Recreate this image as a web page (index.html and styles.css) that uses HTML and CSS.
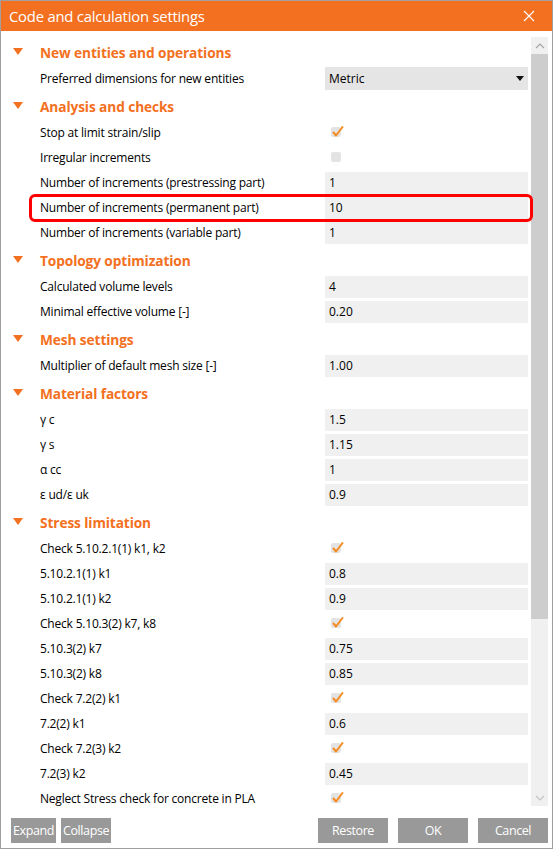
FILE: index.html
```html
<!DOCTYPE html>
<html>
<head>
<meta charset="utf-8">
<link rel="stylesheet" href="styles.css">
</head>
<body>
<div class="window">
  <div class="titlebar">
    <span class="title">Code and calculation settings</span>
    <svg class="close" width="12" height="12" viewBox="0 0 12 12"><path d="M1 1 L11 11 M11 1 L1 11" stroke="#fff" stroke-width="1.1" fill="none"/></svg>
  </div>
  <div class="main">
    <div class="content">
      <div class="group"><span class="tri"></span><span class="gtitle">New entities and operations</span></div>
      <div class="row"><span class="label">Preferred dimensions for new entities</span><div class="value select">Metric<span class="caret"></span></div></div>

      <div class="group"><span class="tri"></span><span class="gtitle">Analysis and checks</span></div>
      <div class="row"><span class="label">Stop at limit strain/slip</span><div class="check"><svg width="16" height="16" viewBox="0 0 16 16"><rect x="1" y="4" width="10" height="10" rx="2" fill="#e3e3e3"/><path d="M3.5 9.5 L6 12.5 L12.5 4" stroke="#f68b1f" stroke-width="2" fill="none" stroke-linecap="round" stroke-linejoin="round"/></svg></div></div>
      <div class="row"><span class="label">Irregular increments</span><div class="check"><svg width="16" height="16" viewBox="0 0 16 16"><rect x="1" y="4" width="10" height="10" rx="2" fill="#e3e3e3"/></svg></div></div>
      <div class="row"><span class="label">Number of increments (prestressing part)</span><div class="value">1</div></div>
      <div class="row hl"><span class="label">Number of increments (permanent part)</span><div class="value">10</div><span class="mark"></span></div>
      <div class="row"><span class="label">Number of increments (variable part)</span><div class="value">1</div></div>

      <div class="group"><span class="tri"></span><span class="gtitle">Topology optimization</span></div>
      <div class="row"><span class="label">Calculated volume levels</span><div class="value">4</div></div>
      <div class="row"><span class="label">Minimal effective volume [-]</span><div class="value">0.20</div></div>

      <div class="group"><span class="tri"></span><span class="gtitle">Mesh settings</span></div>
      <div class="row"><span class="label">Multiplier of default mesh size [-]</span><div class="value">1.00</div></div>

      <div class="group"><span class="tri"></span><span class="gtitle">Material factors</span></div>
      <div class="row"><span class="label">γ c</span><div class="value">1.5</div></div>
      <div class="row"><span class="label">γ s</span><div class="value">1.15</div></div>
      <div class="row"><span class="label">α cc</span><div class="value">1</div></div>
      <div class="row"><span class="label">ε ud/ε uk</span><div class="value">0.9</div></div>

      <div class="group"><span class="tri"></span><span class="gtitle">Stress limitation</span></div>
      <div class="row"><span class="label">Check 5.10.2.1(1) k1, k2</span><div class="check"><svg width="16" height="16" viewBox="0 0 16 16"><rect x="1" y="4" width="10" height="10" rx="2" fill="#e3e3e3"/><path d="M3.5 9.5 L6 12.5 L12.5 4" stroke="#f68b1f" stroke-width="2" fill="none" stroke-linecap="round" stroke-linejoin="round"/></svg></div></div>
      <div class="row"><span class="label">5.10.2.1(1) k1</span><div class="value">0.8</div></div>
      <div class="row"><span class="label">5.10.2.1(1) k2</span><div class="value">0.9</div></div>
      <div class="row"><span class="label">Check 5.10.3(2) k7, k8</span><div class="check"><svg width="16" height="16" viewBox="0 0 16 16"><rect x="1" y="4" width="10" height="10" rx="2" fill="#e3e3e3"/><path d="M3.5 9.5 L6 12.5 L12.5 4" stroke="#f68b1f" stroke-width="2" fill="none" stroke-linecap="round" stroke-linejoin="round"/></svg></div></div>
      <div class="row"><span class="label">5.10.3(2) k7</span><div class="value">0.75</div></div>
      <div class="row"><span class="label">5.10.3(2) k8</span><div class="value">0.85</div></div>
      <div class="row"><span class="label">Check 7.2(2) k1</span><div class="check"><svg width="16" height="16" viewBox="0 0 16 16"><rect x="1" y="4" width="10" height="10" rx="2" fill="#e3e3e3"/><path d="M3.5 9.5 L6 12.5 L12.5 4" stroke="#f68b1f" stroke-width="2" fill="none" stroke-linecap="round" stroke-linejoin="round"/></svg></div></div>
      <div class="row"><span class="label">7.2(2) k1</span><div class="value">0.6</div></div>
      <div class="row"><span class="label">Check 7.2(3) k2</span><div class="check"><svg width="16" height="16" viewBox="0 0 16 16"><rect x="1" y="4" width="10" height="10" rx="2" fill="#e3e3e3"/><path d="M3.5 9.5 L6 12.5 L12.5 4" stroke="#f68b1f" stroke-width="2" fill="none" stroke-linecap="round" stroke-linejoin="round"/></svg></div></div>
      <div class="row"><span class="label">7.2(3) k2</span><div class="value">0.45</div></div>
      <div class="row"><span class="label">Neglect Stress check for concrete in PLA</span><div class="check"><svg width="16" height="16" viewBox="0 0 16 16"><rect x="1" y="4" width="10" height="10" rx="2" fill="#e3e3e3"/><path d="M3.5 9.5 L6 12.5 L12.5 4" stroke="#f68b1f" stroke-width="2" fill="none" stroke-linecap="round" stroke-linejoin="round"/></svg></div></div>
    </div>
    <div class="scrollbar">
      <div class="sb-btn"><svg width="10" height="6" viewBox="0 0 10 6"><path d="M1 5 L5 1 L9 5" stroke="#a6a6a6" stroke-width="1.2" fill="none"/></svg></div>
      <div class="thumb"></div>
      <div class="track"></div>
      <div class="sb-btn"><svg width="10" height="6" viewBox="0 0 10 6"><path d="M1 1 L5 5 L9 1" stroke="#c4c4c4" stroke-width="1.2" fill="none"/></svg></div>
    </div>
  </div>
  <div class="footer">
    <div class="btns">
      <button class="btn small">Expand</button>
      <button class="btn small">Collapse</button>
    </div>
    <div class="btns right">
      <button class="btn">Restore</button>
      <button class="btn">OK</button>
      <button class="btn">Cancel</button>
    </div>
  </div>
</div>
</body>
</html>
```

FILE: styles.css
```css
* { box-sizing: border-box; }
html, body { margin: 0; padding: 0; background: #fff; }
body { font-family: "Segoe UI", "Open Sans", "Noto Sans", sans-serif; color: #000; }

.window {
  width: 553px;
  height: 849px;
  border: 1px solid #a0a0a0;
  display: flex;
  flex-direction: column;
  background: #fff;
}

.titlebar {
  height: 30px;
  flex: none;
  background: #f37021;
  display: flex;
  align-items: center;
  justify-content: space-between;
  padding: 0 17px 0 8px;
}
.title {
  color: #fff;
  font-size: 14.8px;
  letter-spacing: -0.2px;
  line-height: 30px;
}
.close { display: block; }

.main {
  height: 779px;
  flex: none;
  display: flex;
}
.content {
  flex: 1;
  padding-top: 6px;
  min-width: 0;
}

.group {
  height: 29px;
  display: flex;
  align-items: center;
  padding-top: 2px;
}
.tri {
  width: 0;
  height: 0;
  border-left: 5px solid transparent;
  border-right: 5px solid transparent;
  border-top: 7px solid #f37021;
  margin-left: 12px;
  margin-right: 17px;
  margin-top: -3px;
}
.gtitle {
  color: #f37021;
  font-weight: 700;
  font-size: 13.7px;
  letter-spacing: -0.1px;
}

.row {
  height: 25px;
  display: grid;
  grid-template-columns: 324px 203px;
  align-items: center;
  position: relative;
}
.label {
  padding-left: 39px;
  font-size: 12px;
  letter-spacing: -0.2px;
  white-space: nowrap;
  color: #000;
}
.value {
  height: 22px;
  background: #f0f0f0;
  font-size: 12px;
  line-height: 22px;
  padding-left: 4px;
}
.select {
  height: 23px;
  line-height: 23px;
  background: #e5e5e5;
  display: flex;
  justify-content: space-between;
  align-items: center;
  padding-right: 4px;
}
.caret {
  width: 0;
  height: 0;
  border-left: 4px solid transparent;
  border-right: 4px solid transparent;
  border-top: 5px solid #111;
}
.check { height: 22px; display: flex; align-items: center; padding-left: 5px; }
.check svg { display: block; margin-top: -4px; }

.hl .mark {
  position: absolute;
  left: 28px;
  top: -1px;
  width: 504px;
  height: 28px;
  border: 3px solid #ff0000;
  border-radius: 6px;
  pointer-events: none;
}

.scrollbar {
  width: 17px;
  flex: none;
  margin: 6px 4px 4px 0;
  display: flex;
  flex-direction: column;
  background: #f0f0f0;
}
.sb-btn {
  height: 17px;
  flex: none;
  display: flex;
  align-items: center;
  justify-content: center;
}
.thumb { height: 565px; background: #cdcdcd; flex: none; }
.track { flex: 1; }

.footer {
  flex: 1;
  display: flex;
  justify-content: space-between;
  padding: 8px 4px 0 10px;
}
.btns { display: flex; gap: 5px; }
.btns.right { gap: 10px; }
.btn {
  height: 25px;
  width: 70px;
  border: none;
  background: #999999;
  color: #fff;
  font-family: "Segoe UI", "Open Sans", "Noto Sans", sans-serif;
  font-size: 12.5px;
  letter-spacing: -0.4px;
  padding: 0;
}
.btn.small { width: auto; padding: 0 2px; }
```
